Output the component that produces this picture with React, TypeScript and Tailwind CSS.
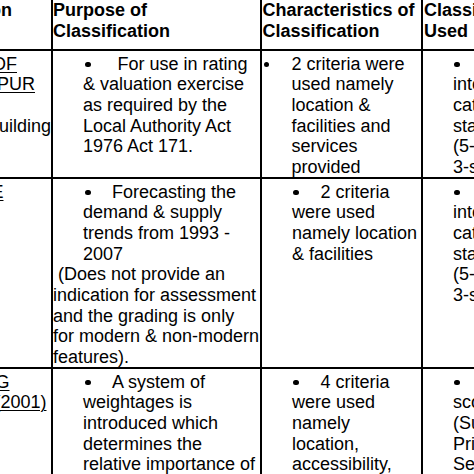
import React from "react";

function Right({ children, cls, u = false }: { children?: React.ReactNode; cls: string; u?: boolean }) {
  return (
    <div className={`flex h-[20.7px] justify-end overflow-hidden whitespace-nowrap ${cls}`}>
      <span className={u ? "underline decoration-1 underline-offset-[2px]" : ""}>{children}</span>
    </div>
  );
}

function Dot() {
  return <span className="mb-[2.2px] inline-block h-[5.5px] w-[5.5px] rounded-full bg-black" />;
}

export default function App() {
  return (
    <div className="h-[474px] w-[474px] overflow-hidden bg-white">
      <div className="grid w-[640px] grid-cols-[51px_207px_159px_217px] grid-rows-[49px_126px_188px_140px] gap-[2px] bg-black font-['Liberation_Sans',Arial,sans-serif] text-[18px] leading-[20.7px] text-black">
        {/* Header */}
        <div className="overflow-hidden bg-white font-bold">
          <Right cls="pr-[39px]">Classification</Right>
        </div>
        <div className="bg-white font-bold whitespace-nowrap">
          Purpose of
          <br />
          Classification
        </div>
        <div className="bg-white pl-[0.5px] font-bold whitespace-nowrap">
          Characteristics of
          <br />
          Classification
        </div>
        <div className="bg-white pl-[1px] font-bold whitespace-nowrap">
          Classification
          <br />
          Used
        </div>

        {/* Row 1 */}
        <div className="overflow-hidden bg-white pt-[2.5px]">
          <Right cls="pr-[34px]" u>
            DEPARTMENT OF
          </Right>
          <Right cls="pr-[16px]" u>
            KUALA LUMPUR
          </Right>
          <div className="h-[20.7px]" />
          <Right cls="pr-0">(Commercial Building</Right>
        </div>
        <div className="bg-white pt-[2.5px] pl-[30px] whitespace-nowrap">
          <span className="inline-block w-[34.5px] pl-[2px]">
            <Dot />
          </span>
          For use in rating
          <br />
          &amp; valuation exercise
          <br />
          as required by the
          <br />
          Local Authority Act
          <br />
          1976 Act 171.
        </div>
        <div className="flex bg-white pt-[2.5px] whitespace-nowrap">
          <span className="w-[29.5px] shrink-0 pl-[1.5px]">
            <Dot />
          </span>
          <div>
            2 criteria were
            <br />
            used namely
            <br />
            location &amp;
            <br />
            facilities and
            <br />
            services
            <br />
            provided
          </div>
        </div>
        <div className="bg-white pt-[2.5px] pl-[30px] whitespace-nowrap">
          <span className="inline-block w-[30px] pl-[1px]">
            <Dot />
          </span>
          Graded
          <br />
          into 3
          <br />
          categories of
          <br />
          star rating
          <br />
          (5-star, 4-star &amp;
          <br />
          3-star)
        </div>

        {/* Row 2 */}
        <div className="overflow-hidden bg-white pt-[2.5px]">
          <Right cls="pr-[47.5px]" u>
            REAL ESTATE
          </Right>
        </div>
        <div className="bg-white pt-[2.5px] whitespace-nowrap">
          <div className="pl-[30px]">
            <span className="inline-block w-[29px] pl-[2px]">
              <Dot />
            </span>
            Forecasting the
            <br />
            demand &amp; supply
            <br />
            trends from 1993 -
            <br />
            2007
          </div>
          <div>
            &nbsp;(Does not provide an
            <br />
            indication for assessment
            <br />
            and the grading is only
            <br />
            for modern &amp; non-modern
            <br />
            features).
          </div>
        </div>
        <div className="bg-white pt-[2.5px] pl-[30px] whitespace-nowrap">
          <span className="inline-block w-[28.5px] pl-[1.3px]">
            <Dot />
          </span>
          2 criteria
          <br />
          were used
          <br />
          namely location
          <br />
          &amp; facilities
        </div>
        <div className="bg-white pt-[2.5px] pl-[30px] whitespace-nowrap">
          <span className="inline-block w-[30px] pl-[1px]">
            <Dot />
          </span>
          Graded
          <br />
          into 3
          <br />
          categories of
          <br />
          star rating
          <br />
          (5-star, 4-star &amp;
          <br />
          3-star)
        </div>

        {/* Row 3 */}
        <div className="overflow-hidden bg-white pt-[2.5px]">
          <Right cls="pr-[41.5px]" u>
            JONES LANG
          </Right>
          <Right cls="pr-[4.5px]" u>
            WOOTTON (2001)
          </Right>
        </div>
        <div className="bg-white pt-[2.5px] pl-[30px] whitespace-nowrap">
          <span className="inline-block w-[29px] pl-[2px]">
            <Dot />
          </span>
          A system of
          <br />
          weightages is
          <br />
          introduced which
          <br />
          determines the
          <br />
          relative importance of
        </div>
        <div className="bg-white pt-[2.5px] pl-[30px] whitespace-nowrap">
          <span className="inline-block w-[28.5px] pl-[1.3px]">
            <Dot />
          </span>
          4 criteria
          <br />
          were used
          <br />
          namely
          <br />
          location,
          <br />
          accessibility,
          <br />
          building quality
        </div>
        <div className="bg-white pt-[2.5px] pl-[30px] whitespace-nowrap">
          <span className="inline-block w-[30px] pl-[1px]">
            <Dot />
          </span>
          Ranking
          <br />
          score
          <br />
          (Super Prime,
          <br />
          Prime,
          <br />
          Secondary)
        </div>
      </div>
    </div>
  );
}
